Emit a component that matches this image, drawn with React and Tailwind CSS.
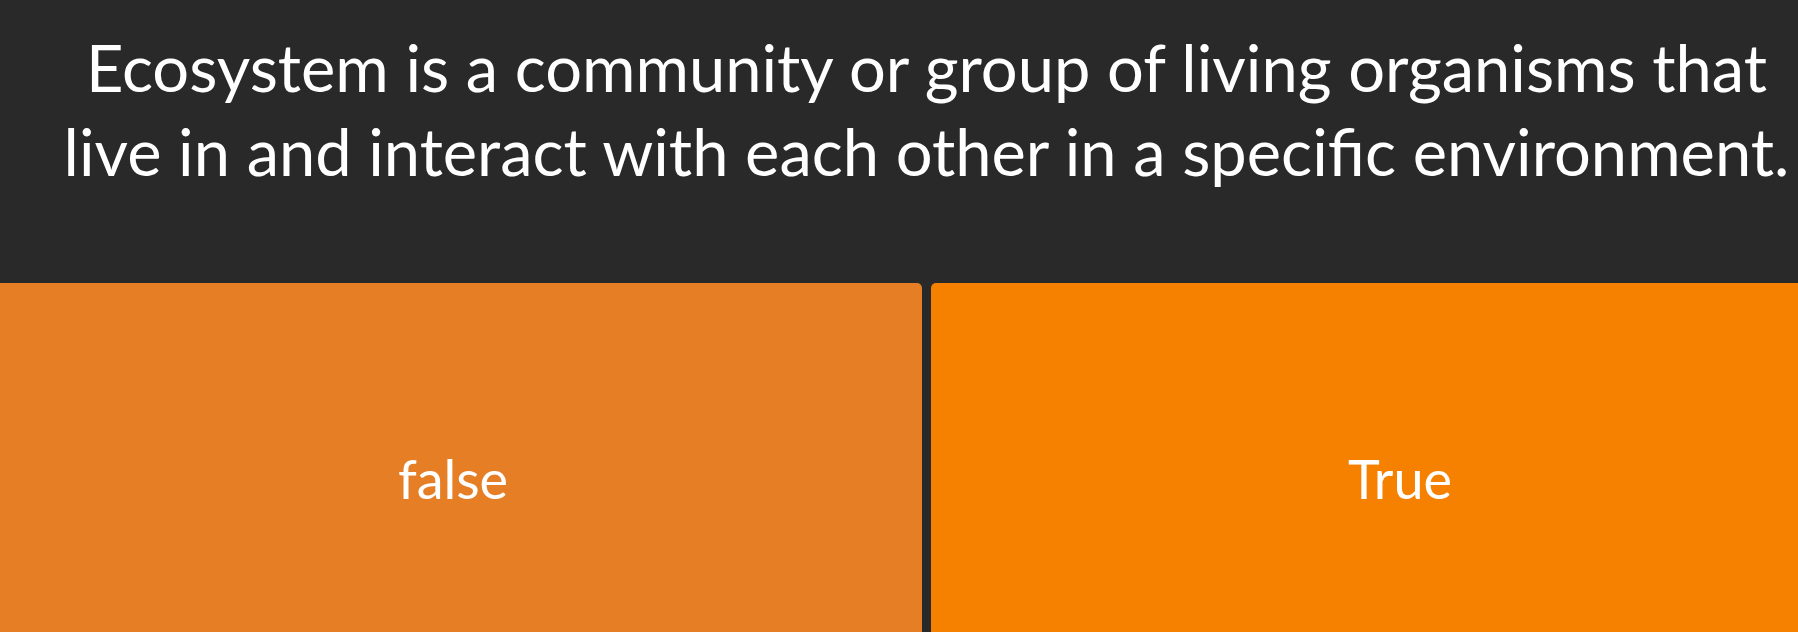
export default function App() {
  return (
    <div className="w-[1798px] h-[632px] overflow-hidden bg-[#292929] font-['Lato','Open_Sans',sans-serif]">
      {/* the page is a bit wider than the window, so the question block sits off-centre */}
      <div className="w-[1885px] -ml-[16px] flex flex-col">
        <div className="h-[283px] flex justify-center pt-[25px]">
          <p className="text-center text-white text-[65px] leading-[84px]">
            Ecosystem is a community or group of living organisms that
            <br />
            live in and interact with each other in a specific environment.
          </p>
        </div>
        <div className="grid grid-cols-2 gap-[9px] h-[390px]">
          <button className="rounded-t-[5px] bg-[#e57e25] text-white text-[54px] flex items-center justify-center">
            false
          </button>
          <button className="rounded-t-[5px] bg-[#f68000] text-white text-[54px] flex items-center justify-center">
            True
          </button>
        </div>
      </div>
    </div>
  );
}
